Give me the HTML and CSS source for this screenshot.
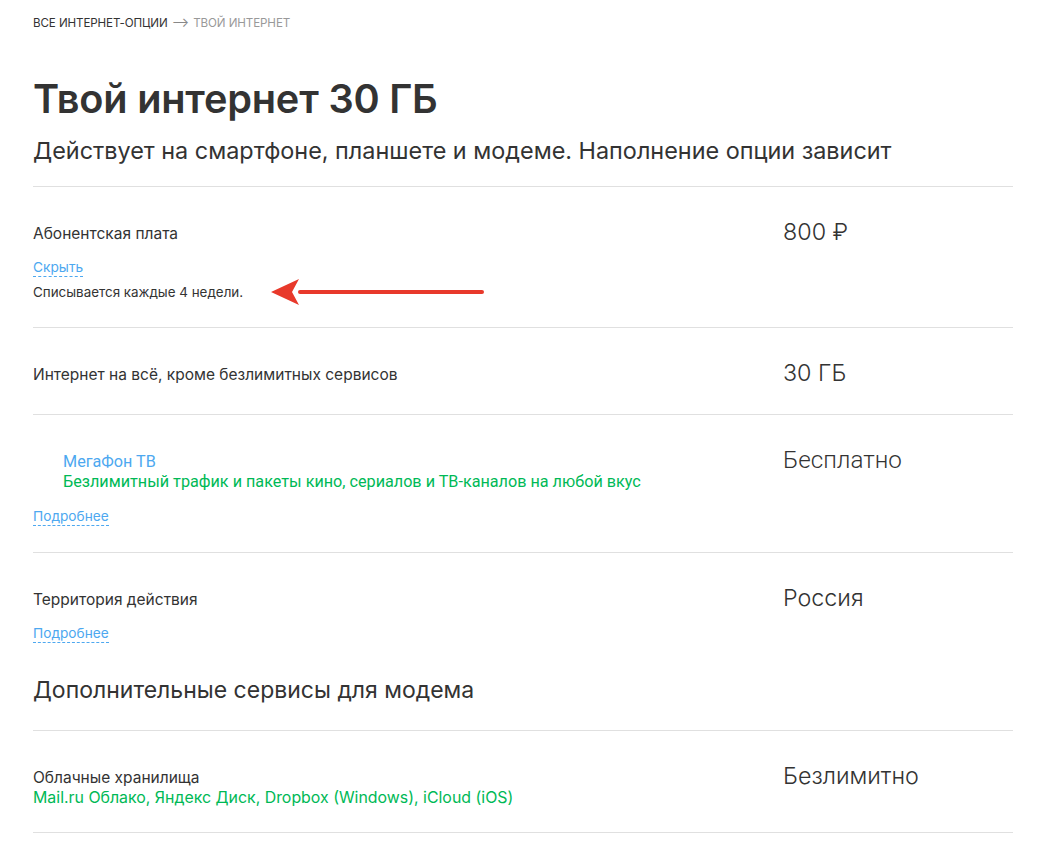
FILE: index.html
```html
<!DOCTYPE html>
<html lang="ru">
  <head>
    <meta charset="UTF-8">
    <title>Твой интернет 30 ГБ</title>
    <link rel="stylesheet" href="styles.css">
  </head>
  <body>
    <div class="page">
      <div class="crumbs">
        <a href="#">Все интернет-опции</a>
        <span class="crumbs-arrow">&#10230;</span>
        <span class="crumbs-current">Твой интернет</span>
      </div>

      <h1>Твой интернет 30 ГБ</h1>
      <p class="lead">Действует на смартфоне, планшете и модеме. Наполнение опции зависит</p>

      <div class="row">
        <div class="label">
          <div class="name">Абонентская плата</div>
          <a class="dash" href="#">Скрыть</a>
          <div class="note">Списывается каждые 4 недели.</div>
          <svg class="pointer" width="220" height="30" viewBox="0 0 220 30">
            <path d="M30 15 H212" stroke="#e8392b" stroke-width="4" stroke-linecap="round"/>
            <path d="M1 15 L29 2 L22 15 L29 28 Z" fill="#e8392b"/>
          </svg>
        </div>
        <div class="value">800 &#8381;</div>
      </div>

      <div class="row">
        <div class="label">
          <div class="name">Интернет на всё, кроме безлимитных сервисов</div>
        </div>
        <div class="value">30 ГБ</div>
      </div>

      <div class="row">
        <div class="label">
          <div class="service">
            <div class="service-name">МегаФон ТВ</div>
            <div class="service-desc">Безлимитный трафик и пакеты кино, сериалов и ТВ-каналов на любой вкус</div>
          </div>
          <a class="dash" href="#">Подробнее</a>
        </div>
        <div class="value value-light">Бесплатно</div>
      </div>

      <div class="row row-open">
        <div class="label">
          <div class="name">Территория действия</div>
          <a class="dash" href="#">Подробнее</a>
        </div>
        <div class="value">Россия</div>
      </div>

      <h2>Дополнительные сервисы для модема</h2>

      <div class="row row-last">
        <div class="label">
          <div class="name">Облачные хранилища</div>
          <div class="green">Mail.ru Облако, Яндекс Диск, Dropbox (Windows), iCloud (iOS)</div>
        </div>
        <div class="value">Безлимитно</div>
      </div>
    </div>
  </body>
</html>
```

FILE: styles.css
```css
html { margin: 0; padding: 0; background: #fff; }
body { margin: 0; font-family: Inter, "Open Sans", sans-serif; color: #333; }

.page { width: 980px; padding: 0 0 0 33px; }

.crumbs { padding-top: 14px; font-size: 11.6px; text-transform: uppercase; line-height: 16px; letter-spacing: -0.1px; }
.crumbs a { color: #333; text-decoration: none; }
.crumbs-arrow { color: #888; margin: 0 1px; font-size: 13px; }
.crumbs-current { color: #999; }

h1 { margin: 40px 0 0 0; font-size: 39.7px; font-weight: 600; line-height: 56px; letter-spacing: -0.2px; }
.lead { margin: 8px 0 0 0; font-size: 23.4px; line-height: 32px; padding-bottom: 19px; border-bottom: 1px solid #e0e0e0; }

h2 { margin: 0; padding: 31px 0 24px 0; font-size: 23px; font-weight: 400; line-height: 32px; border-bottom: 1px solid #e0e0e0; }

.row { display: grid; grid-template-columns: 750px 1fr; padding: 37px 0 26px 0; border-bottom: 1px solid #e0e0e0; }
.row-open { border-bottom: none; padding-bottom: 0; }
.row-last { padding-bottom: 24px; }

.label { position: relative; font-size: 15.5px; line-height: 20px; }
.name { color: #333; }

.value { margin-top: -7px; font-size: 23.3px; font-weight: 300; line-height: 30px; color: #333; }
.value-light { font-family: Roboto, sans-serif; font-size: 24.2px; }

a.dash { display: inline-block; margin-top: 14px; font-size: 13.7px; line-height: 18px; color: #4da8f0; text-decoration: none; border-bottom: 1px dashed #4da8f0; }
.note { margin-top: 6px; font-size: 13.4px; line-height: 18px; }

.service { padding-left: 30px; font-family: Roboto, sans-serif; font-size: 16.2px; line-height: 20px; }
.service-name { color: #4da8f0; }
.service-desc { color: #00b956; }
.service + a.dash { margin-top: 15px; }

.green { font-size: 15.9px; color: #00b956; }

.pointer { position: absolute; left: 237px; top: 53px; }
```
